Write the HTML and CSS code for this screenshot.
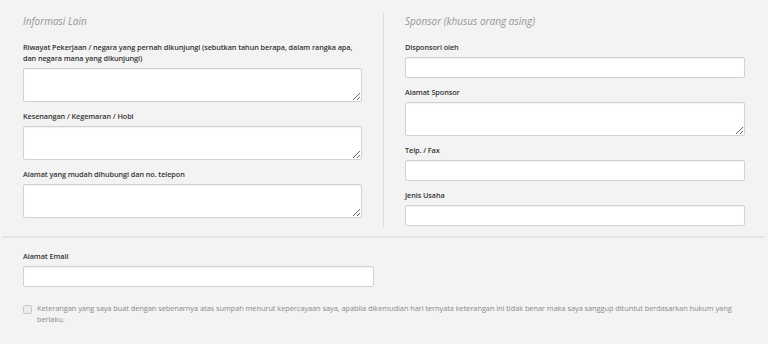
FILE: index.html
```html
<!DOCTYPE html>
<html lang="id">
<head>
<meta charset="utf-8">
<link rel="stylesheet" href="styles.css">
</head>
<body>
<form class="form">
  <div class="cols">
    <section class="col col-left">
      <h3 class="legend">Informasi Lain</h3>
      <div class="field">
        <label class="label">Riwayat Pekerjaan / negara yang pernah dikunjungi (sebutkan tahun berapa, dalam rangka apa, dan negara mana yang dikunjungi)</label>
        <textarea class="control area"></textarea>
      </div>
      <div class="field">
        <label class="label">Kesenangan / Kegemaran / Hobi</label>
        <textarea class="control area"></textarea>
      </div>
      <div class="field">
        <label class="label">Alamat yang mudah dihubungi dan no. telepon</label>
        <textarea class="control area"></textarea>
      </div>
    </section>
    <section class="col col-right">
      <h3 class="legend">Sponsor (khusus orang asing)</h3>
      <div class="field">
        <label class="label">Disponsori oleh</label>
        <input class="control input" type="text">
      </div>
      <div class="field">
        <label class="label">Alamat Sponsor</label>
        <textarea class="control area"></textarea>
      </div>
      <div class="field">
        <label class="label">Telp. / Fax</label>
        <input class="control input" type="text">
      </div>
      <div class="field">
        <label class="label">Jenis Usaha</label>
        <input class="control input" type="text">
      </div>
    </section>
  </div>
  <hr class="divider">
  <div class="bottom">
    <div class="field email">
      <label class="label">Alamat Email</label>
      <input class="control input" type="text">
    </div>
    <label class="agree">
      <span class="box"></span>
      <span class="agree-text">Keterangan yang saya buat dengan sebenarnya atas sumpah menurut kepercayaan saya, apabila dikemudian hari ternyata keterangan ini tidak benar maka saya sanggup dituntut berdasarkan hukum yang berlaku.</span>
    </label>
  </div>
</form>
</body>
</html>
```

FILE: styles.css
```css
* { box-sizing: border-box; }
html, body {
  margin: 0;
  padding: 0;
  background: #f3f3f3;
}
body {
  font-family: "Open Sans", "DejaVu Sans", sans-serif;
  color: #333;
  width: 768px;
  height: 344px;
  overflow: hidden;
}
.form { margin: 0; padding-top: 12px; }
.cols {
  display: flex;
}
.col {
  padding-bottom: 2px;
}
.col-left {
  width: 384px;
  padding-left: 23px;
  padding-right: 21px;
  border-right: 1px solid #dedede;
}
.col-right {
  width: 384px;
  padding-left: 21px;
  padding-right: 23px;
}
.legend {
  margin: 0 0 11.5px 0;
  font-size: 10px;
  line-height: 18px;
  font-style: italic;
  font-weight: 400;
  color: #959595;
}
.field {
  display: flex;
  flex-direction: column;
  margin-bottom: 9px;
}
.col .field:last-child { margin-bottom: 0; }
.label {
  font-size: 7.3px;
  line-height: 11px;
  font-weight: 600;
  letter-spacing: -0.09px;
  color: #333;
  margin-bottom: 4px;
}
.control {
  display: block;
  width: 100%;
  background: #fff;
  border: 1px solid #d2d2d2;
  border-radius: 2px;
  box-shadow: inset 0 1px 1px rgba(0,0,0,0.06);
  margin: 0;
  padding: 2px 4px;
  font-family: inherit;
  font-size: 8px;
  outline: none;
}
.input { height: 21px; }
.area { height: 34px; resize: vertical; }
.divider {
  margin: 8px 3px 0 2px;
  border: 0;
  border-top: 2px solid #e4e4e4;
  height: 0;
}
.bottom {
  padding: 13px 23px 0 23px;
}
.email { width: 351px; margin-bottom: 16px; }
.agree {
  display: flex;
  align-items: flex-start;
  gap: 5px;
}
.box {
  flex: none;
  width: 9px;
  height: 9px;
  margin-top: 2px;
  border: 1px solid #c8c8c8;
  border-radius: 2px;
  background: #ececec;
}
.agree-text {
  font-size: 7.4px;
  line-height: 11px;
  letter-spacing: -0.05px;
  color: #8a8a8a;
  max-width: 705px;
}
```
